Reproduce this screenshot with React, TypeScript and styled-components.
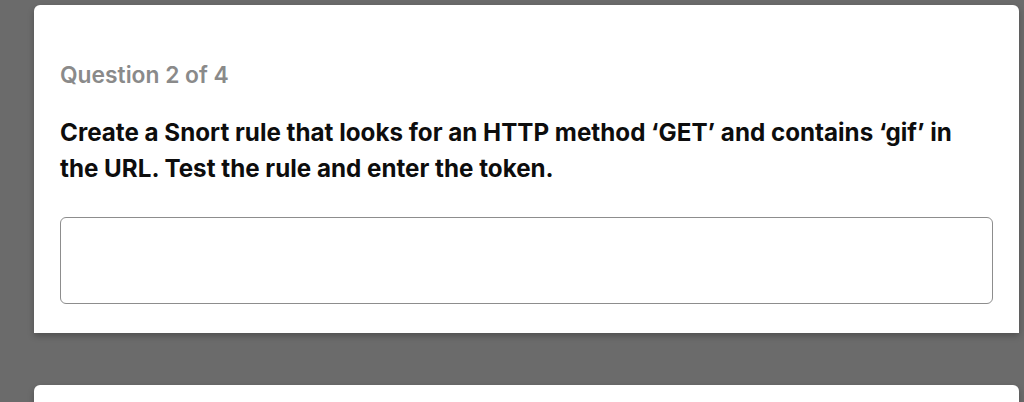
import React from "react";
import styled, { createGlobalStyle } from "styled-components";

const GlobalStyle = createGlobalStyle`
  html, body {
    margin: 0;
    padding: 0;
    background: #6b6b6b;
    font-family: Inter, "Noto Sans", sans-serif;
  }
`;

const Page = styled.div`
  display: flex;
  flex-direction: column;
  gap: 52px;
  padding: 5px 5px 0 34px;
  height: 402px;
  box-sizing: border-box;
  overflow: hidden;
`;

const Card = styled.section<{ $minHeight?: number }>`
  background: #fff;
  border-radius: 6px 6px 0 0;
  box-shadow: 0 3px 6px rgba(0, 0, 0, 0.25);
  padding: 55px 26px 29px 26px;
  flex-shrink: 0;
  min-height: ${({ $minHeight }) => ($minHeight ? `${$minHeight}px` : "auto")};
`;

const Counter = styled.div`
  font-size: 22.8px;
  font-weight: 600;
  color: #8a8a8a;
  line-height: 30px;
`;

const Prompt = styled.h2`
  margin: 25px 0 0 0;
  max-width: 910px;
  font-size: 24.2px;
  font-weight: 700;
  color: #0d0d0d;
  line-height: 36px;
`;

const Answer = styled.input`
  display: block;
  box-sizing: border-box;
  width: 100%;
  height: 87px;
  margin-top: 30px;
  border: 1.5px solid #8d8d8d;
  border-radius: 6px;
  background: #fff;
  outline: none;
  font: inherit;
  font-size: 20px;
  padding: 0 16px;
`;

export default function App() {
  return (
    <>
      <GlobalStyle />
      <Page>
        <Card>
          <Counter>Question 2 of 4</Counter>
          <Prompt>
            Create a Snort rule that looks for an HTTP method ‘GET’ and contains ‘gif’ in
            the URL. Test the rule and enter the token.
          </Prompt>
          <Answer type="text" aria-label="Answer" />
        </Card>
        <Card $minHeight={120} />
      </Page>
    </>
  );
}
